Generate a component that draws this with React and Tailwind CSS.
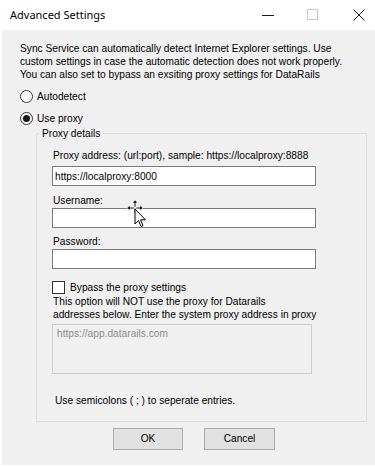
import { useState } from 'react';

const ui = { fontFamily: '"Liberation Sans", Arial, sans-serif' };

function Radio({ checked, label, onClick }) {
    return (
        <button type="button" onClick={onClick} className="flex h-[13px] items-center text-left">
            <span className="flex h-[13px] w-[13px] items-center justify-center rounded-full border border-[#333333] bg-white">
                {checked ? <span className="h-[7px] w-[7px] rounded-full bg-[#1a1a1a]" /> : null}
            </span>
            <span className="ml-[4px] leading-[13px]">{label}</span>
        </button>
    );
}

function MoveCursor() {
    return (
        <svg className="pointer-events-none absolute left-[126px] top-[199px]" width="22" height="30" viewBox="0 0 22 30">
            <g fill="#000" stroke="#fff" strokeWidth="0.6">
                <path d="M9 1 L11.5 4 L9.8 4 L9.8 8 L8.2 8 L8.2 4 L6.5 4 Z" />
                <path d="M1 9 L4 6.5 L4 8.2 L8 8.2 L8 9.8 L4 9.8 L4 11.5 Z" />
                <path d="M17 9 L14 6.5 L14 8.2 L10 8.2 L10 9.8 L14 9.8 L14 11.5 Z" />
                <path d="M8.2 10 L9.8 10 L9.8 14 L8.2 14 Z" />
            </g>
            <path d="M9 10 L9 25 L12.5 21.5 L15 27.5 L17 26.6 L14.6 20.8 L19.5 20.8 Z" fill="#fff" stroke="#000" strokeWidth="1" strokeLinejoin="round" />
        </svg>
    );
}

export default function App() {
    const [mode, setMode] = useState('proxy');
    const [bypass, setBypass] = useState(false);

    return (
        <div className="relative h-[466px] w-[375px] overflow-hidden bg-white text-[10.2px] text-black" style={ui}>
            <div className="flex h-[30px] items-center pl-[10px]">
                <span className="text-[11px] text-black" style={{ fontFamily: '"Noto Sans", "Open Sans", sans-serif' }}>
                    Advanced Settings
                </span>
                <div className="ml-auto flex items-center">
                    <svg width="12" height="12" viewBox="0 0 12 12" className="mr-[33px]">
                        <path d="M0 6.5 H12" stroke="#1a1a1a" strokeWidth="1" />
                    </svg>
                    <svg width="12" height="12" viewBox="0 0 12 12" className="mr-[34px]">
                        <rect x="0.5" y="0.5" width="10" height="10" fill="none" stroke="#c6c6c6" strokeWidth="1" />
                    </svg>
                    <svg width="12" height="12" viewBox="0 0 12 12" className="mr-[10px]">
                        <path d="M0.5 0.5 L11.5 11.5 M11.5 0.5 L0.5 11.5" stroke="#1a1a1a" strokeWidth="1" />
                    </svg>
                </div>
            </div>

            <div className="ml-[2px] h-[435px] bg-[#f0f0f0] pl-[18px] pt-[12px]">
                <p className="leading-[13px]">
                    Sync Service can automatically detect Internet Explorer settings. Use
                    <br />
                    custom settings in case the automatic detection does not work properly.
                    <br />
                    You can also set to bypass an exsiting proxy settings for DataRails
                </p>

                <div className="mt-[9px]">
                    <Radio checked={mode === 'auto'} label="Autodetect" onClick={() => setMode('auto')} />
                </div>
                <div className="mt-[9px]">
                    <Radio checked={mode === 'proxy'} label="Use proxy" onClick={() => setMode('proxy')} />
                </div>

                <fieldset className="ml-[16px] mt-[2px] w-[331px] border border-[#dcdcdc] pb-[14px] pl-[15px]">
                    <legend className="-ml-[13px] px-[3px] leading-[13px]">Proxy details</legend>

                    <div className="mt-[9px] pl-[1px] leading-[13px]">Proxy address: (url:port), sample: https://localproxy:8888</div>
                    <input
                        defaultValue="https://localproxy:8000"
                        className="mt-[4px] block h-[20px] w-[264px] border border-[#7a7a7a] bg-white px-[2px] text-[10.2px] leading-[13px] text-black outline-none"
                        style={ui}
                    />

                    <div className="mt-[8px] pl-[1px] leading-[13px]">Username:</div>
                    <input className="mt-[1px] block h-[20px] w-[264px] border border-[#7a7a7a] bg-white px-[2px] text-[10.2px] outline-none" style={ui} />

                    <div className="mt-[7px] pl-[1px] leading-[13px]">Password:</div>
                    <input type="password" className="mt-[1px] block h-[20px] w-[264px] border border-[#7a7a7a] bg-white px-[2px] text-[10.2px] outline-none" style={ui} />

                    <button type="button" onClick={() => setBypass(!bypass)} className="mt-[12px] flex items-center text-left">
                        <span className="flex h-[13px] w-[13px] items-center justify-center border border-[#333333] bg-white">
                            {bypass ? (
                                <svg width="9" height="9" viewBox="0 0 9 9">
                                    <path d="M1 4.5 L3.5 7 L8 1.5" fill="none" stroke="#000" strokeWidth="1.3" />
                                </svg>
                            ) : null}
                        </span>
                        <span className="ml-[5px] leading-[13px]">Bypass the proxy settings</span>
                    </button>
                    <p className="mt-[1px] pl-[1px] leading-[13px]">
                        This option will NOT use the proxy for Datarails
                        <br />
                        addresses below. Enter the system proxy address in proxy
                    </p>
                    <div className="mt-[3px] h-[50px] w-[260px] border border-[#cccccc] bg-[#f0f0f0] pl-[4px] pt-[2px] leading-[13px] text-[#8c8c8c]">
                        https://app.datarails.com
                    </div>

                    <div className="mt-[20px] pl-[3px] leading-[13px]">Use semicolons ( ; ) to seperate entries.</div>
                </fieldset>

                <div className="ml-[93px] mt-[6px] flex gap-[21px]">
                    <button type="button" className="h-[22px] w-[70px] border border-[#adadad] bg-[#e1e1e1] text-[10.2px]" style={ui}>
                        OK
                    </button>
                    <button type="button" className="h-[22px] w-[71px] border border-[#adadad] bg-[#e1e1e1] text-[10.2px]" style={ui}>
                        Cancel
                    </button>
                </div>
            </div>

            <MoveCursor />
        </div>
    );
}
